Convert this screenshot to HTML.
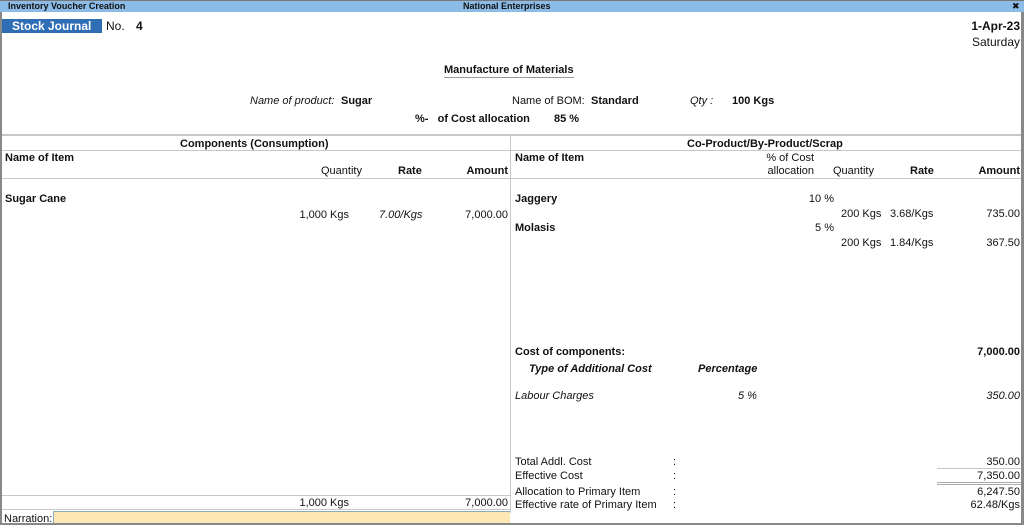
<!DOCTYPE html>
<html><head><meta charset="utf-8"><style>
*{margin:0;padding:0;box-sizing:border-box}
body{width:1024px;height:525px;background:#fff;position:relative;overflow:hidden;font-family:"Liberation Sans",Arial,sans-serif;font-size:11px;color:#111}
.t{position:absolute;line-height:12px;white-space:nowrap}
.r{text-align:right}
.b{font-weight:bold}
.i{font-style:italic}
.h{position:absolute;height:1px;background:#c8c8c8}
.v{position:absolute;width:1px;background:#c8c8c8}
</style></head><body>
<div style="position:absolute;left:0;top:0;width:1024px;height:12px;background:#8bbbe6;border-top:1px solid #777"></div>
<div class="t b" style="left:8px;top:1px;font-size:9px;line-height:10px">Inventory Voucher Creation</div>
<div class="t b" style="left:463px;top:1px;font-size:9px;line-height:10px">National Enterprises</div>
<div class="t b" style="left:1012px;top:2px;font-size:9px;line-height:10px;font-family:'DejaVu Sans',sans-serif">✖</div>
<div style="position:absolute;left:0;top:12px;width:2px;height:513px;background:#888"></div>
<div style="position:absolute;right:0;top:12px;width:3px;height:513px;background:#888"></div>
<div style="position:absolute;left:0;bottom:0;width:1024px;height:2px;background:#888"></div>

<div style="position:absolute;left:2px;top:19px;width:100px;height:14px;background:#2f6db5"></div>
<div class="t b" style="left:12px;top:20px;color:#fff;font-size:12px">Stock Journal</div>
<div class="t" style="left:106px;top:20px;font-size:12px">No.</div>
<div class="t b" style="left:136px;top:20px;font-size:12px">4</div>
<div class="t r b" style="right:4px;top:20px;font-size:12px">1-Apr-23</div>
<div class="t r" style="right:4px;top:36px;font-size:12px">Saturday</div>

<div class="t b" style="left:444px;top:64px;border-bottom:1px solid #999;padding-bottom:1px">Manufacture of Materials</div>
<div class="t i" style="left:250px;top:95px">Name of product:</div>
<div class="t b" style="left:341px;top:95px">Sugar</div>
<div class="t" style="left:512px;top:95px">Name of BOM:</div>
<div class="t b" style="left:591px;top:95px">Standard</div>
<div class="t i" style="left:690px;top:95px">Qty :</div>
<div class="t b" style="left:732px;top:95px">100 Kgs</div>
<div class="t b" style="left:415px;top:113px">%-&nbsp;&nbsp; of Cost allocation</div>
<div class="t b" style="left:554px;top:113px">85 %</div>

<div class="h" style="left:2px;top:134px;width:1019px;height:2px"></div>
<div class="v" style="left:510px;top:136px;height:377px"></div>
<div class="h" style="left:2px;top:150px;width:1019px"></div>
<div class="h" style="left:2px;top:178px;width:1019px"></div>

<div class="t b" style="left:180px;top:138px">Components (Consumption)</div>
<div class="t b" style="left:687px;top:138px">Co-Product/By-Product/Scrap</div>
<div class="t b" style="left:5px;top:152px">Name of Item</div>
<div class="t" style="left:321px;top:165px">Quantity</div>
<div class="t b" style="left:398px;top:165px">Rate</div>
<div class="t r b" style="right:516px;top:165px">Amount</div>
<div class="t b" style="left:515px;top:152px">Name of Item</div>
<div class="t r" style="right:210px;top:152px">% of Cost</div>
<div class="t r" style="right:210px;top:165px">allocation</div>
<div class="t" style="left:833px;top:165px">Quantity</div>
<div class="t b" style="left:910px;top:165px">Rate</div>
<div class="t r b" style="right:4px;top:165px">Amount</div>

<div class="t b" style="left:5px;top:193px">Sugar Cane</div>
<div class="t r" style="right:675px;top:209px">1,000 Kgs</div>
<div class="t i" style="left:379px;top:209px">7.00/Kgs</div>
<div class="t r" style="right:516px;top:209px">7,000.00</div>

<div class="t b" style="left:515px;top:193px">Jaggery</div>
<div class="t r" style="right:190px;top:193px">10 %</div>
<div class="t" style="left:841px;top:208px">200 Kgs</div>
<div class="t" style="left:890px;top:208px">3.68/Kgs</div>
<div class="t r" style="right:4px;top:208px">735.00</div>
<div class="t b" style="left:515px;top:222px">Molasis</div>
<div class="t r" style="right:190px;top:222px">5 %</div>
<div class="t" style="left:841px;top:237px">200 Kgs</div>
<div class="t" style="left:890px;top:237px">1.84/Kgs</div>
<div class="t r" style="right:4px;top:237px">367.50</div>

<div class="t b" style="left:515px;top:346px">Cost of components:</div>
<div class="t r b" style="right:4px;top:346px">7,000.00</div>
<div class="t b i" style="left:529px;top:363px">Type of Additional Cost</div>
<div class="t b i" style="left:698px;top:363px">Percentage</div>
<div class="t i" style="left:515px;top:390px">Labour Charges</div>
<div class="t i" style="left:738px;top:390px">5 %</div>
<div class="t r i" style="right:4px;top:390px">350.00</div>

<div class="t" style="left:515px;top:456px">Total Addl. Cost</div>
<div class="t" style="left:673px;top:456px">:</div>
<div class="t r" style="right:4px;top:456px">350.00</div>
<div class="h" style="left:937px;top:468px;width:84px"></div>
<div class="t" style="left:515px;top:470px">Effective Cost</div>
<div class="t" style="left:673px;top:470px">:</div>
<div class="t r" style="right:4px;top:470px">7,350.00</div>
<div class="h" style="left:937px;top:482px;width:84px;height:3px;border-top:1px solid #aaa;border-bottom:1px solid #aaa;background:#fff"></div>
<div class="t" style="left:515px;top:486px">Allocation to Primary Item</div>
<div class="t" style="left:673px;top:486px">:</div>
<div class="t r" style="right:4px;top:486px">6,247.50</div>
<div class="t" style="left:515px;top:499px">Effective rate of Primary Item</div>
<div class="t" style="left:673px;top:499px">:</div>
<div class="t r" style="right:4px;top:499px">62.48/Kgs</div>

<div class="h" style="left:2px;top:495px;width:508px"></div>
<div class="t r" style="right:675px;top:497px">1,000 Kgs</div>
<div class="t r" style="right:516px;top:497px">7,000.00</div>
<div class="h" style="left:2px;top:509px;width:508px"></div>
<div class="t" style="left:4px;top:513px">Narration:</div>
<div style="position:absolute;left:53px;top:511px;width:457px;height:12px;background:#fde7b5;border-top:1px solid #8ab;border-left:1px solid #8ab"></div>
</body></html>
